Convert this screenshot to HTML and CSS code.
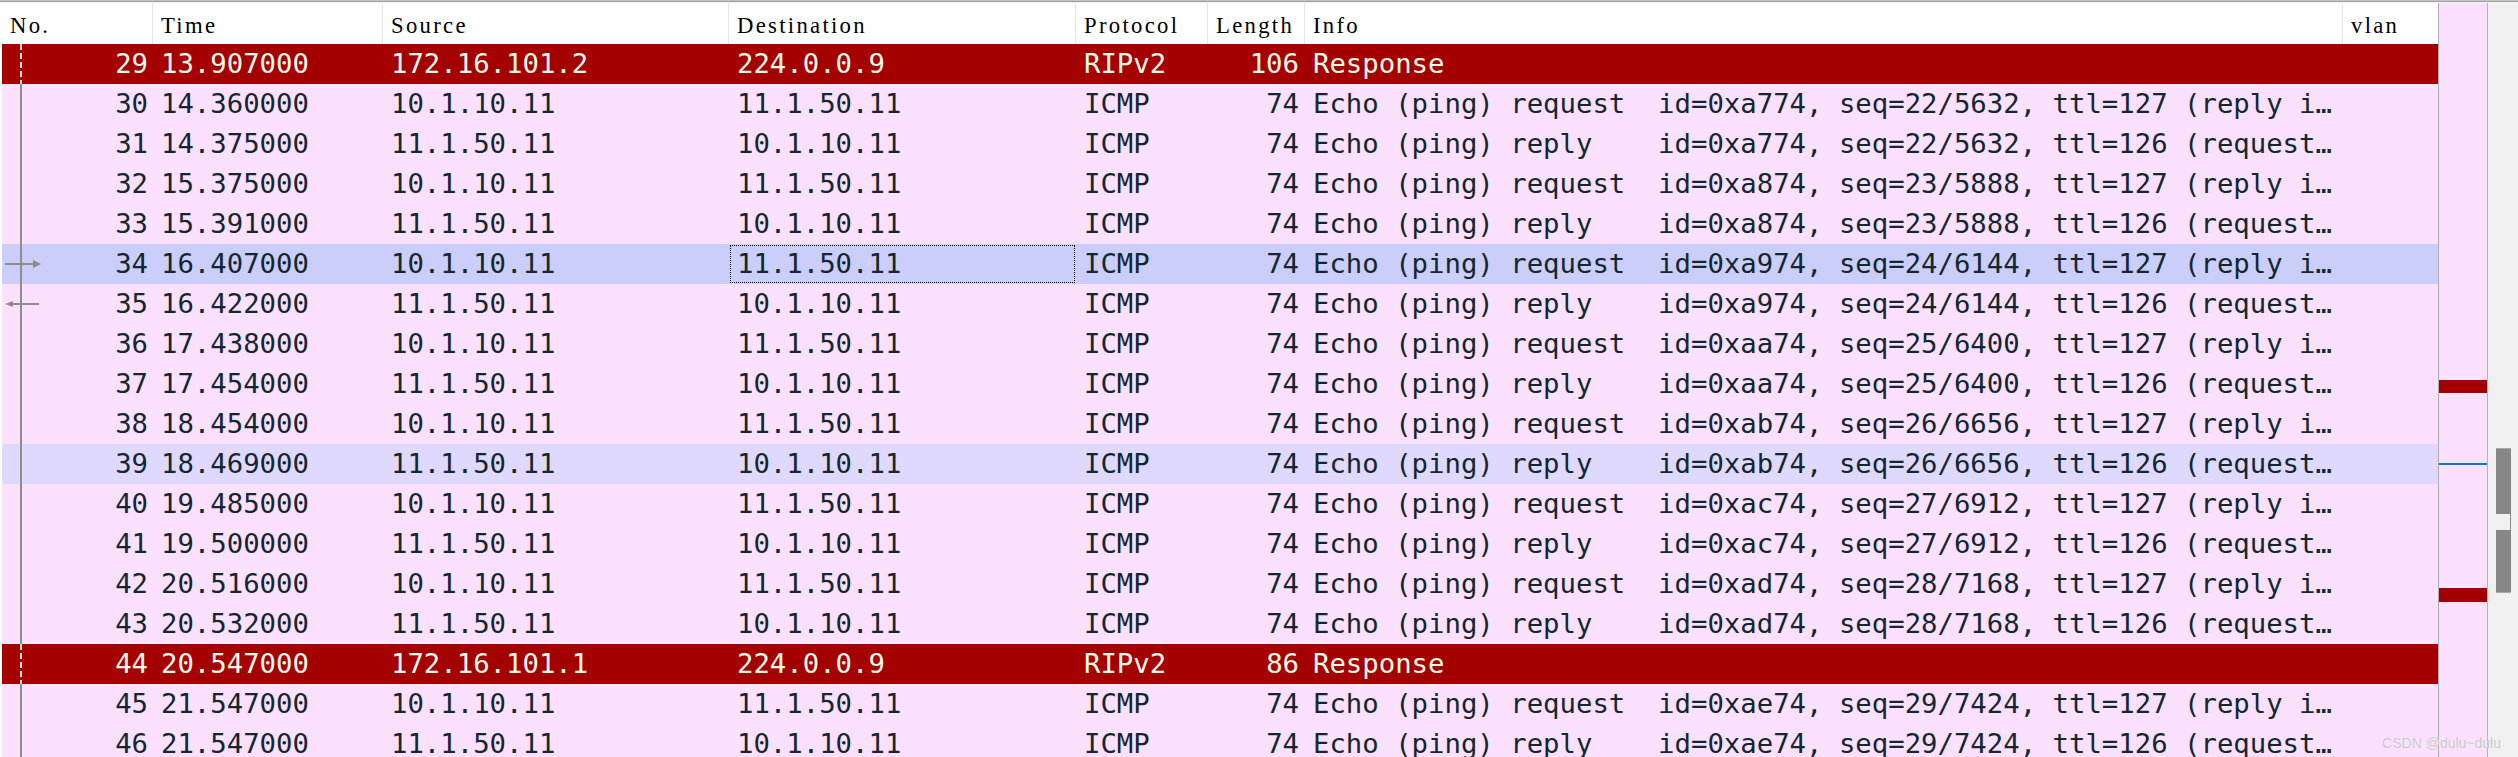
FILE: index.html
```html
<!DOCTYPE html>
<html>
<head>
<meta charset="utf-8">
<title>Packet list</title>
<link rel="stylesheet" href="styles.css">
</head>
<body>
<div class="window">
  <div class="topline"></div>
  <div class="main">
    <div class="list">
      <div class="row head">
        <div class="hc">No.</div>
        <div class="hc">Time</div>
        <div class="hc">Source</div>
        <div class="hc">Destination</div>
        <div class="hc">Protocol</div>
        <div class="hc">Length</div>
        <div class="hc">Info</div>
        <div class="hc">vlan</div>
      </div>

      <div class="row rip">
        <div class="c no">29</div><div class="c">13.907000</div><div class="c">172.16.101.2</div><div class="c">224.0.0.9</div><div class="c">RIPv2</div><div class="c len">106</div><div class="c">Response</div><div class="c"></div>
      </div>
      <div class="row icmp">
        <div class="c no">30</div><div class="c">14.360000</div><div class="c">10.1.10.11</div><div class="c">11.1.50.11</div><div class="c">ICMP</div><div class="c len">74</div><div class="c">Echo (ping) request  id=0xa774, seq=22/5632, ttl=127 (reply i…</div><div class="c"></div>
      </div>
      <div class="row icmp">
        <div class="c no">31</div><div class="c">14.375000</div><div class="c">11.1.50.11</div><div class="c">10.1.10.11</div><div class="c">ICMP</div><div class="c len">74</div><div class="c">Echo (ping) reply    id=0xa774, seq=22/5632, ttl=126 (request…</div><div class="c"></div>
      </div>
      <div class="row icmp">
        <div class="c no">32</div><div class="c">15.375000</div><div class="c">10.1.10.11</div><div class="c">11.1.50.11</div><div class="c">ICMP</div><div class="c len">74</div><div class="c">Echo (ping) request  id=0xa874, seq=23/5888, ttl=127 (reply i…</div><div class="c"></div>
      </div>
      <div class="row icmp">
        <div class="c no">33</div><div class="c">15.391000</div><div class="c">11.1.50.11</div><div class="c">10.1.10.11</div><div class="c">ICMP</div><div class="c len">74</div><div class="c">Echo (ping) reply    id=0xa874, seq=23/5888, ttl=126 (request…</div><div class="c"></div>
      </div>
      <div class="row icmp selected">
        <div class="c no">34<svg class="arrow" width="36" height="40" viewBox="0 0 36 40"><line x1="0" y1="20" x2="29" y2="20" stroke="#8c8c8c" stroke-width="2"/><polygon points="28,16 36,20 28,24" fill="#8c8c8c"/></svg></div><div class="c">16.407000</div><div class="c">10.1.10.11</div><div class="c focus">11.1.50.11</div><div class="c">ICMP</div><div class="c len">74</div><div class="c">Echo (ping) request  id=0xa974, seq=24/6144, ttl=127 (reply i…</div><div class="c"></div>
      </div>
      <div class="row icmp">
        <div class="c no">35<svg class="arrow" width="36" height="40" viewBox="0 0 36 40"><polygon points="0,20 8,17 8,23" fill="#8c8c8c"/><line x1="7" y1="20" x2="34" y2="20" stroke="#8c8c8c" stroke-width="2"/></svg></div><div class="c">16.422000</div><div class="c">11.1.50.11</div><div class="c">10.1.10.11</div><div class="c">ICMP</div><div class="c len">74</div><div class="c">Echo (ping) reply    id=0xa974, seq=24/6144, ttl=126 (request…</div><div class="c"></div>
      </div>
      <div class="row icmp">
        <div class="c no">36</div><div class="c">17.438000</div><div class="c">10.1.10.11</div><div class="c">11.1.50.11</div><div class="c">ICMP</div><div class="c len">74</div><div class="c">Echo (ping) request  id=0xaa74, seq=25/6400, ttl=127 (reply i…</div><div class="c"></div>
      </div>
      <div class="row icmp">
        <div class="c no">37</div><div class="c">17.454000</div><div class="c">11.1.50.11</div><div class="c">10.1.10.11</div><div class="c">ICMP</div><div class="c len">74</div><div class="c">Echo (ping) reply    id=0xaa74, seq=25/6400, ttl=126 (request…</div><div class="c"></div>
      </div>
      <div class="row icmp">
        <div class="c no">38</div><div class="c">18.454000</div><div class="c">10.1.10.11</div><div class="c">11.1.50.11</div><div class="c">ICMP</div><div class="c len">74</div><div class="c">Echo (ping) request  id=0xab74, seq=26/6656, ttl=127 (reply i…</div><div class="c"></div>
      </div>
      <div class="row icmp hover">
        <div class="c no">39</div><div class="c">18.469000</div><div class="c">11.1.50.11</div><div class="c">10.1.10.11</div><div class="c">ICMP</div><div class="c len">74</div><div class="c">Echo (ping) reply    id=0xab74, seq=26/6656, ttl=126 (request…</div><div class="c"></div>
      </div>
      <div class="row icmp">
        <div class="c no">40</div><div class="c">19.485000</div><div class="c">10.1.10.11</div><div class="c">11.1.50.11</div><div class="c">ICMP</div><div class="c len">74</div><div class="c">Echo (ping) request  id=0xac74, seq=27/6912, ttl=127 (reply i…</div><div class="c"></div>
      </div>
      <div class="row icmp">
        <div class="c no">41</div><div class="c">19.500000</div><div class="c">11.1.50.11</div><div class="c">10.1.10.11</div><div class="c">ICMP</div><div class="c len">74</div><div class="c">Echo (ping) reply    id=0xac74, seq=27/6912, ttl=126 (request…</div><div class="c"></div>
      </div>
      <div class="row icmp">
        <div class="c no">42</div><div class="c">20.516000</div><div class="c">10.1.10.11</div><div class="c">11.1.50.11</div><div class="c">ICMP</div><div class="c len">74</div><div class="c">Echo (ping) request  id=0xad74, seq=28/7168, ttl=127 (reply i…</div><div class="c"></div>
      </div>
      <div class="row icmp">
        <div class="c no">43</div><div class="c">20.532000</div><div class="c">11.1.50.11</div><div class="c">10.1.10.11</div><div class="c">ICMP</div><div class="c len">74</div><div class="c">Echo (ping) reply    id=0xad74, seq=28/7168, ttl=126 (request…</div><div class="c"></div>
      </div>
      <div class="row rip">
        <div class="c no">44</div><div class="c">20.547000</div><div class="c">172.16.101.1</div><div class="c">224.0.0.9</div><div class="c">RIPv2</div><div class="c len">86</div><div class="c">Response</div><div class="c"></div>
      </div>
      <div class="row icmp">
        <div class="c no">45</div><div class="c">21.547000</div><div class="c">10.1.10.11</div><div class="c">11.1.50.11</div><div class="c">ICMP</div><div class="c len">74</div><div class="c">Echo (ping) request  id=0xae74, seq=29/7424, ttl=127 (reply i…</div><div class="c"></div>
      </div>
      <div class="row icmp">
        <div class="c no">46</div><div class="c">21.547000</div><div class="c">11.1.50.11</div><div class="c">10.1.10.11</div><div class="c">ICMP</div><div class="c len">74</div><div class="c">Echo (ping) reply    id=0xae74, seq=29/7424, ttl=126 (request…</div><div class="c"></div>
      </div>
    </div>

    <div class="minimap">
      <div class="mark red m1"></div>
      <div class="mark blue m2"></div>
      <div class="mark red m3"></div>
    </div>

    <div class="scroll">
      <div class="thumb">
        <div class="seg seg-top"></div>
        <div class="seg-gap"></div>
        <div class="seg seg-bottom"></div>
      </div>
    </div>
  </div>
  <div class="watermark">CSDN @dulu~dulu</div>
</div>
</body>
</html>
```

FILE: styles.css
```css
html, body {
  margin: 0;
  padding: 0;
  background: #ffffff;
}

.window {
  position: relative;
  width: 2518px;
  height: 757px;
  overflow: hidden;
  background: #ffffff;
}

.topline {
  height: 3px;
  background: linear-gradient(to bottom, #c4c4c4 0, #c4c4c4 1px, #a0a0a0 1px, #a0a0a0 2px, #f4f4f4 2px);
}

.main {
  display: flex;
  height: 754px;
}

.list {
  width: 2439px;
  box-sizing: border-box;
  padding-left: 2px;
  border-right: 1px solid #ababab;
  background: #ffffff;
  flex: none;
}

.row {
  display: grid;
  grid-template-columns: 151px 230px 346px 347px 132px 97px 1038px 95px;
  height: 40px;
}

.head {
  height: 41px;
  background: #ffffff;
}

.hc {
  font-family: "Liberation Serif", "Times New Roman", serif;
  font-size: 22.7px;
  letter-spacing: 2.3px;
  color: #000000;
  line-height: 37px;
  padding: 4px 0 0 8px;
  border-right: 1px solid #e4e4e4;
  white-space: nowrap;
  overflow: hidden;
}

.hc:last-child {
  border-right: none;
}

.c {
  font-family: "DejaVu Sans Mono", monospace;
  font-size: 27.3px;
  line-height: 39px;
  padding-left: 8px;
  white-space: pre;
  overflow: hidden;
}

.c.no {
  position: relative;
  text-align: right;
  padding-left: 0;
  padding-right: 5px;
}

.c.len {
  text-align: right;
  padding-left: 0;
  padding-right: 6px;
}

.c.no::before {
  content: "";
  position: absolute;
  left: 18px;
  top: 0;
  bottom: 0;
  width: 2px;
  background: #8e8e8e;
}

.rip .c.no::before {
  background: repeating-linear-gradient(to bottom, #f0e0e0 0, #f0e0e0 6px, transparent 6px, transparent 9px);
}

.arrow {
  position: absolute;
  left: 3px;
  top: 0;
}

.icmp {
  background: #fce0ff;
  color: #12272e;
}

.rip {
  background: #a40000;
  color: #fffbea;
}

.icmp.selected {
  background: #cbcefa;
}

.icmp.hover {
  background: #e0d9ff;
}

.focus {
  outline: 1px dotted #000000;
  outline-offset: -2px;
}

.minimap {
  position: relative;
  width: 48px;
  flex: none;
  background: #fce0ff;
  border-right: 1px solid #b4b4b4;
}

.mark {
  position: absolute;
  left: 0;
  right: 0;
}

.mark.red {
  background: #a40000;
}

.mark.blue {
  background: #0078d7;
}

.m1 { top: 377px; height: 13px; }
.m2 { top: 460px; height: 2px; }
.m3 { top: 585px; height: 14px; }

.scroll {
  width: 30px;
  flex: none;
  background: #f0f0f0;
}

.thumb {
  margin: 445px 0 0 8px;
  width: 15px;
  display: flex;
  flex-direction: column;
}

.seg {
  background: #868686;
}

.seg-top {
  height: 65px;
  border-top: 1px solid #a8a8a8;
}

.seg-gap {
  height: 16px;
  box-sizing: border-box;
  border-right: 1px solid #8a8a8a;
}

.seg-bottom {
  height: 62px;
  border-bottom: 1px solid #a8a8a8;
}

.watermark {
  position: absolute;
  right: 17px;
  bottom: 6px;
  font-family: "Liberation Sans", Arial, sans-serif;
  font-size: 14px;
  line-height: 16px;
  color: #c8c8c8;
  text-shadow: 0 0 1px #ffffff;
}
```
